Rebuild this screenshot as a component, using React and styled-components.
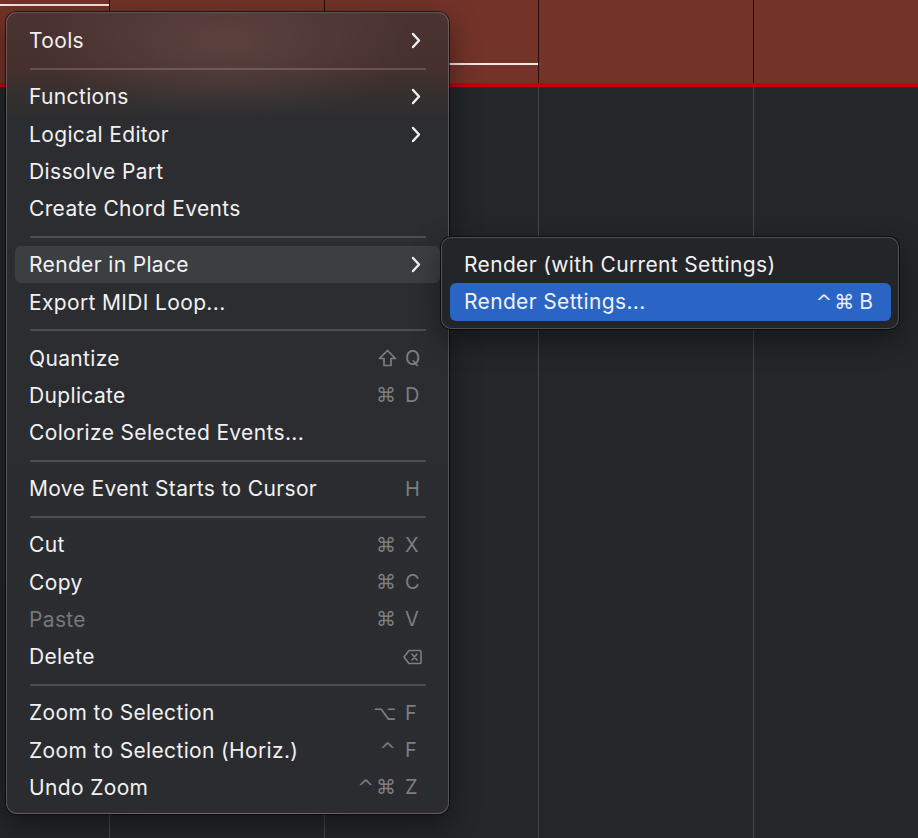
import React from 'react'
import styled, { createGlobalStyle } from 'styled-components'

const GlobalStyle = createGlobalStyle`
  html, body {
    margin: 0;
    padding: 0;
    background: #23272a;
  }
  body {
    font-family: Inter, "Noto Sans", "DejaVu Sans", sans-serif;
    -webkit-font-smoothing: antialiased;
  }
`

const Stage = styled.div`
  position: relative;
  width: 918px;
  height: 838px;
  overflow: hidden;
  background: #23272a;
`

const Track = styled.div`
  display: grid;
  grid-template-columns: 110px 215px 214px 215px 1fr;
  height: 83px;
  background: #733329;
  border-bottom: 4px solid #c4000c;
`

const Lane = styled.div`
  display: grid;
  grid-template-columns: 110px 215px 214px 215px 1fr;
  height: 751px;
`

const Cell = styled.div`
  position: relative;
  border-right: ${(p) => (p.$last ? 'none' : p.$top ? '1.5px solid #2a0d0a' : '1.5px solid #43474b')};
`

const NoteLine = styled.div`
  position: absolute;
  left: 0;
  right: 0;
  top: ${(p) => p.$y}px;
  height: 2px;
  background: #f4e6e2;
`

const Menu = styled.div`
  position: absolute;
  left: 6px;
  top: 12px;
  width: 443px;
  box-sizing: border-box;
  padding: 9px 8px 7px;
  border-radius: 11px;
  border: 1px solid rgba(255, 255, 255, 0.2);
  box-shadow: 0 0 0 1px rgba(0, 0, 0, 0.6), 0 10px 30px rgba(0, 0, 0, 0.45);
  background:
    radial-gradient(ellipse 190px 75px at 220px 30px, rgba(120, 90, 86, 0.4), transparent),
    linear-gradient(to bottom, #4a3331 0px, #45302e 55px, #36302f 80px, #2c2d30 110px, #2a2c2f 100%);
  display: flex;
  flex-direction: column;
`

const SubMenu = styled(Menu)`
  left: 441px;
  top: 237px;
  width: 458px;
  padding: 8px 7px 7px 8px;
  border-radius: 10px;
  background: #232528;
`

const Item = styled.div`
  display: flex;
  align-items: center;
  height: 37.33px;
  padding: 0 18px 0 14px;
  border-radius: 6px;
  font-size: 21px;
  color: ${(p) => (p.$disabled ? '#76787b' : '#f1f1f2')};
  background: ${(p) => (p.$selected ? '#2a64c5' : p.$hover ? '#3c3f42' : 'transparent')};
  letter-spacing: 0.35px;
`

const Label = styled.span`
  flex: 1;
  white-space: nowrap;
`

const Shortcut = styled.span`
  display: flex;
  align-items: center;
  color: ${(p) => (p.$bright ? '#e8eefa' : '#7c7e81')};
  font-size: 20px;
  letter-spacing: 0;
`

const Mods = styled.span`
  display: flex;
  align-items: center;
  font-family: "DejaVu Sans", sans-serif;
  font-size: 20px;
  margin-right: ${(p) => (p.$tight ? 3 : 7)}px;
  letter-spacing: 2px;
`

const Key = styled.span`
  display: inline-block;
  min-width: ${(p) => (p.$tight ? 'auto' : '17px')};
  font-size: ${(p) => (p.$tight ? '21px' : '20px')};
`

const Chevron = styled.svg`
  width: 10px;
  height: 17px;
  margin-right: 1px;
`

const Separator = styled.div`
  height: 2px;
  margin: 8.3px 14px 8.4px 15px;
  background: rgba(255, 255, 255, 0.16);
`

const Glyph = styled.svg`
  width: ${(p) => p.$w}px;
  height: ${(p) => p.$h}px;
  margin-right: ${(p) => p.$gap || 0}px;
`

const Arrow = () => (
  <Chevron viewBox="0 0 10 17">
    <path d="M2 2 L8 8.5 L2 15" fill="none" stroke="#f1f1f2" strokeWidth="2.4" strokeLinecap="round" strokeLinejoin="round" />
  </Chevron>
)

const ShiftIcon = () => (
  <Glyph $w={19} $h={18} $gap={8} viewBox="0 0 19 18">
    <path d="M9.5 1.5 L17.5 9.5 H13 V16.5 H6 V9.5 H1.5 Z" fill="none" stroke="#7c7e81" strokeWidth="1.7" strokeLinejoin="round" />
  </Glyph>
)

const Backspace = () => (
  <Glyph $w={19} $h={16} viewBox="0 0 19 16">
    <path d="M6 1.5 H17 a1 1 0 0 1 1 1 V13.5 a1 1 0 0 1 -1 1 H6 L1 8 Z" fill="none" stroke="#7c7e81" strokeWidth="1.6" strokeLinejoin="round" />
    <path d="M9 5 L14 11 M14 5 L9 11" stroke="#7c7e81" strokeWidth="1.6" strokeLinecap="round" />
  </Glyph>
)

const ShortcutText = ({ mods, k }) => (
  <Shortcut>
    {mods === 'shift' ? <ShiftIcon /> : mods ? <Mods>{mods}</Mods> : null}
    <Key>{k}</Key>
  </Shortcut>
)

const groups = [
  [{ label: 'Tools', sub: true }],
  [
    { label: 'Functions', sub: true },
    { label: 'Logical Editor', sub: true },
    { label: 'Dissolve Part' },
    { label: 'Create Chord Events' },
  ],
  [
    { label: 'Render in Place', sub: true, hover: true },
    { label: 'Export MIDI Loop...' },
  ],
  [
    { label: 'Quantize', mods: 'shift', k: 'Q' },
    { label: 'Duplicate', mods: '⌘', k: 'D' },
    { label: 'Colorize Selected Events...' },
  ],
  [{ label: 'Move Event Starts to Cursor', k: 'H' }],
  [
    { label: 'Cut', mods: '⌘', k: 'X' },
    { label: 'Copy', mods: '⌘', k: 'C' },
    { label: 'Paste', mods: '⌘', k: 'V', disabled: true },
    { label: 'Delete', backspace: true },
  ],
  [
    { label: 'Zoom to Selection', mods: '⌥', k: 'F' },
    { label: 'Zoom to Selection (Horiz.)', mods: '^', k: 'F' },
    { label: 'Undo Zoom', mods: '^⌘', k: 'Z' },
  ],
]

const App = () => {
  return (
    <Stage>
      <GlobalStyle />
      <Track>
        <Cell $top><NoteLine $y={4} /></Cell>
        <Cell $top />
        <Cell $top><NoteLine $y={63} /></Cell>
        <Cell $top />
        <Cell $top $last />
      </Track>
      <Lane>
        <Cell />
        <Cell />
        <Cell />
        <Cell />
        <Cell $last />
      </Lane>

      <Menu>
        {groups.map((group, gi) => (
          <React.Fragment key={gi}>
            {gi > 0 ? <Separator /> : null}
            {group.map((item) => (
              <Item key={item.label} $hover={item.hover} $disabled={item.disabled}>
                <Label>{item.label}</Label>
                {item.sub ? <Arrow /> : null}
                {item.k ? <ShortcutText mods={item.mods} k={item.k} /> : null}
                {item.backspace ? <Backspace /> : null}
              </Item>
            ))}
          </React.Fragment>
        ))}
      </Menu>

      <SubMenu>
        <Item>
          <Label>Render (with Current Settings)</Label>
        </Item>
        <Item $selected>
          <Label>Render Settings...</Label>
          <Shortcut $bright>
            <Mods $tight>^⌘</Mods>
            <Key $tight>B</Key>
          </Shortcut>
        </Item>
      </SubMenu>
    </Stage>
  )
}

export default App
